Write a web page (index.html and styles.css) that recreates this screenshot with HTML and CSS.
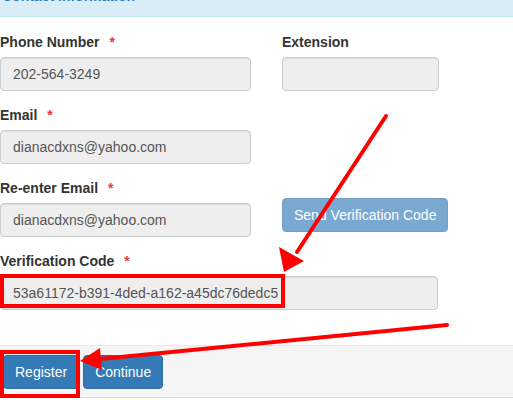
FILE: index.html
```html
<!DOCTYPE html>
<html lang="en">

<head>
  <meta charset="UTF-8">
  <meta name="viewport" content="width=device-width, initial-scale=1.0">
  <title>Contact Information</title>
  <link rel="stylesheet" href="styles.css">
</head>

<body>
  <div class="panel">
    <div class="panel-heading">
      <h3 class="panel-title">Contact Information</h3>
    </div>

    <div class="panel-body">
      <div class="row">
        <div class="form-group">
          <label>Phone Number <span class="req">*</span></label>
          <input class="form-control" type="text" value="202-564-3249" readonly>
        </div>
        <div class="form-group">
          <label>Extension</label>
          <input class="form-control" type="text" value="" readonly>
        </div>
      </div>

      <div class="row">
        <div class="form-group">
          <label>Email <span class="req">*</span></label>
          <input class="form-control" type="text" value="dianacdxns@yahoo.com" readonly>
        </div>
      </div>

      <div class="row">
        <div class="form-group">
          <label>Re-enter Email <span class="req">*</span></label>
          <input class="form-control" type="text" value="dianacdxns@yahoo.com" readonly>
        </div>
        <div class="form-group send-group">
          <button class="btn btn-primary" disabled>Send Verification Code</button>
        </div>
      </div>

      <div class="form-group wide">
        <label>Verification Code <span class="req">*</span></label>
        <input class="form-control" type="text" value="53a61172-b391-4ded-a162-a45dc76dedc5" readonly>
      </div>
    </div>

    <div class="panel-footer">
      <button class="btn btn-primary">Register</button>
      <button class="btn btn-primary">Continue</button>
    </div>
  </div>

  <!-- annotation marks drawn over the form -->
  <svg class="marks" width="513" height="400" viewBox="0 0 513 400">
    <g fill="none" stroke="#f00" stroke-width="4">
      <rect x="2" y="276" width="281" height="30" />
      <rect x="2" y="352" width="76" height="44" />
      <line x1="386" y1="116" x2="297" y2="252" stroke-linecap="round" />
      <line x1="447" y1="325" x2="100" y2="359" stroke-linecap="round" />
    </g>
    <g fill="#f00">
      <polygon points="284,272 279,247 304,261" />
      <polygon points="80,361 100,348 102,370" />
    </g>
  </svg>
</body>

</html>
```

FILE: styles.css
```css
body {
  font-family: "Liberation Sans", Arial, sans-serif;
  font-size: 14px;
  color: #333;
  margin: 0;
  background-color: #fff;
}

.panel {
  width: 513px;
  border-bottom: 1px solid #bce8f1;
}

.panel-heading {
  height: 16px;
  background-color: #d9edf7;
  border-bottom: 1px solid #bce8f1;
  overflow: hidden;
}

.panel-title {
  margin: -12px 0 0 2px;
  font-size: 14px;
  font-weight: bold;
  line-height: 16px;
  color: #2f78c0;
}

.panel-body {
  padding: 15px 0 21px 0;
}

.row {
  display: grid;
  grid-template-columns: 251px 157px;
  column-gap: 31px;
}

.form-group {
  margin-bottom: 14px;
}

.form-group.wide {
  width: 438px;
}

.send-group {
  padding-top: 20px;
}

.send-group .btn {
  white-space: nowrap;
}

label {
  display: block;
  font-weight: bold;
  line-height: 20px;
  margin-bottom: 5px;
}

.req {
  color: #e4393c;
  margin-left: 6px;
}

.form-control {
  display: block;
  box-sizing: border-box;
  width: 100%;
  height: 34px;
  padding: 6px 12px;
  font-family: inherit;
  font-size: 14px;
  color: #555;
  background-color: #eee;
  border: 1px solid #ccc;
  border-radius: 4px;
  box-shadow: inset 0 1px 1px rgba(0, 0, 0, 0.075);
}

.btn {
  height: 34px;
  padding: 6px 11px;
  font-family: inherit;
  font-size: 14px;
  line-height: 20px;
  border-radius: 4px;
  border: 1px solid #2e6da4;
  cursor: pointer;
}

.btn-primary {
  color: #fff;
  background-color: #337ab7;
}

.btn-primary:disabled {
  opacity: 0.65;
  cursor: not-allowed;
}

.panel-footer {
  display: flex;
  gap: 4px;
  padding: 9px 0 8px 3px;
  background-color: #f5f5f5;
  border-top: 1px solid #e8e8e8;
}

.marks {
  position: absolute;
  left: 0;
  top: 0;
  pointer-events: none;
}
```
